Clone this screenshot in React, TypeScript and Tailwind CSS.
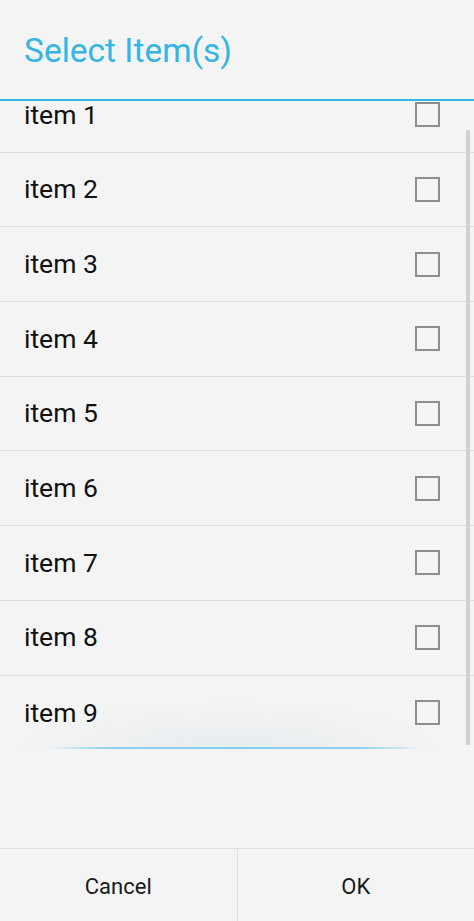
import React from 'react'

const items = ['item 1', 'item 2', 'item 3', 'item 4', 'item 5', 'item 6', 'item 7', 'item 8', 'item 9']

function Row({ label, last }: { label: string; last: boolean }) {
  return (
    <div
      className={
        'flex h-[74.7px] shrink-0 items-center justify-between pl-6 pr-[34px] ' +
        (last ? '' : 'border-b border-[#dedede]')
      }
    >
      <span className="text-[26.5px] leading-none text-[#111]">{label}</span>
      <span className="h-[25px] w-[25px] border-2 border-[#8e8e8e]" />
    </div>
  )
}

export default function App() {
  return (
    <div
      className="flex h-[921px] w-[474px] flex-col overflow-hidden bg-[#f4f4f4]"
      style={{ fontFamily: 'Roboto, "Noto Sans", sans-serif' }}
    >
      <div className="flex h-[99px] shrink-0 items-center pl-6 pt-[3px]">
        <h1 className="text-[33.5px] leading-none text-[#33b5e5]">Select Item(s)</h1>
      </div>
      <div className="h-[2px] shrink-0 bg-[#33b5e5]" />

      <div className="relative flex-1 overflow-hidden">
        <div className="-mt-[23px] flex flex-col">
          {items.map((it, i) => (
            <Row key={it} label={it} last={i === items.length - 1} />
          ))}
        </div>

        {/* scrollbar */}
        <div className="absolute right-[4px] top-[29px] h-[615px] w-[4px] bg-[#d2d2d2]" />

        {/* overscroll glow */}
        <div className="pointer-events-none absolute left-[0px] top-[598px] h-[50px] w-[460px] bg-[radial-gradient(ellipse_50%_100%_at_50%_100%,rgba(120,170,200,0.10),rgba(120,170,200,0))]" />
        <div className="pointer-events-none absolute left-[50px] top-[646px] h-[2px] w-[370px] bg-[linear-gradient(90deg,rgba(51,181,229,0),rgba(51,181,229,0.5)_15%,rgba(51,181,229,0.55)_50%,rgba(51,181,229,0.5)_85%,rgba(51,181,229,0))]" />
      </div>

      <div className="flex h-[73px] shrink-0 border-t border-[#e0e0e0]">
        <button className="flex flex-1 items-center justify-center border-r border-[#e0e0e0] pt-[2px] text-[22px] text-[#1a1a1a]">
          Cancel
        </button>
        <button className="flex flex-1 items-center justify-center pt-[2px] text-[22px] text-[#1a1a1a]">
          OK
        </button>
      </div>
    </div>
  )
}
